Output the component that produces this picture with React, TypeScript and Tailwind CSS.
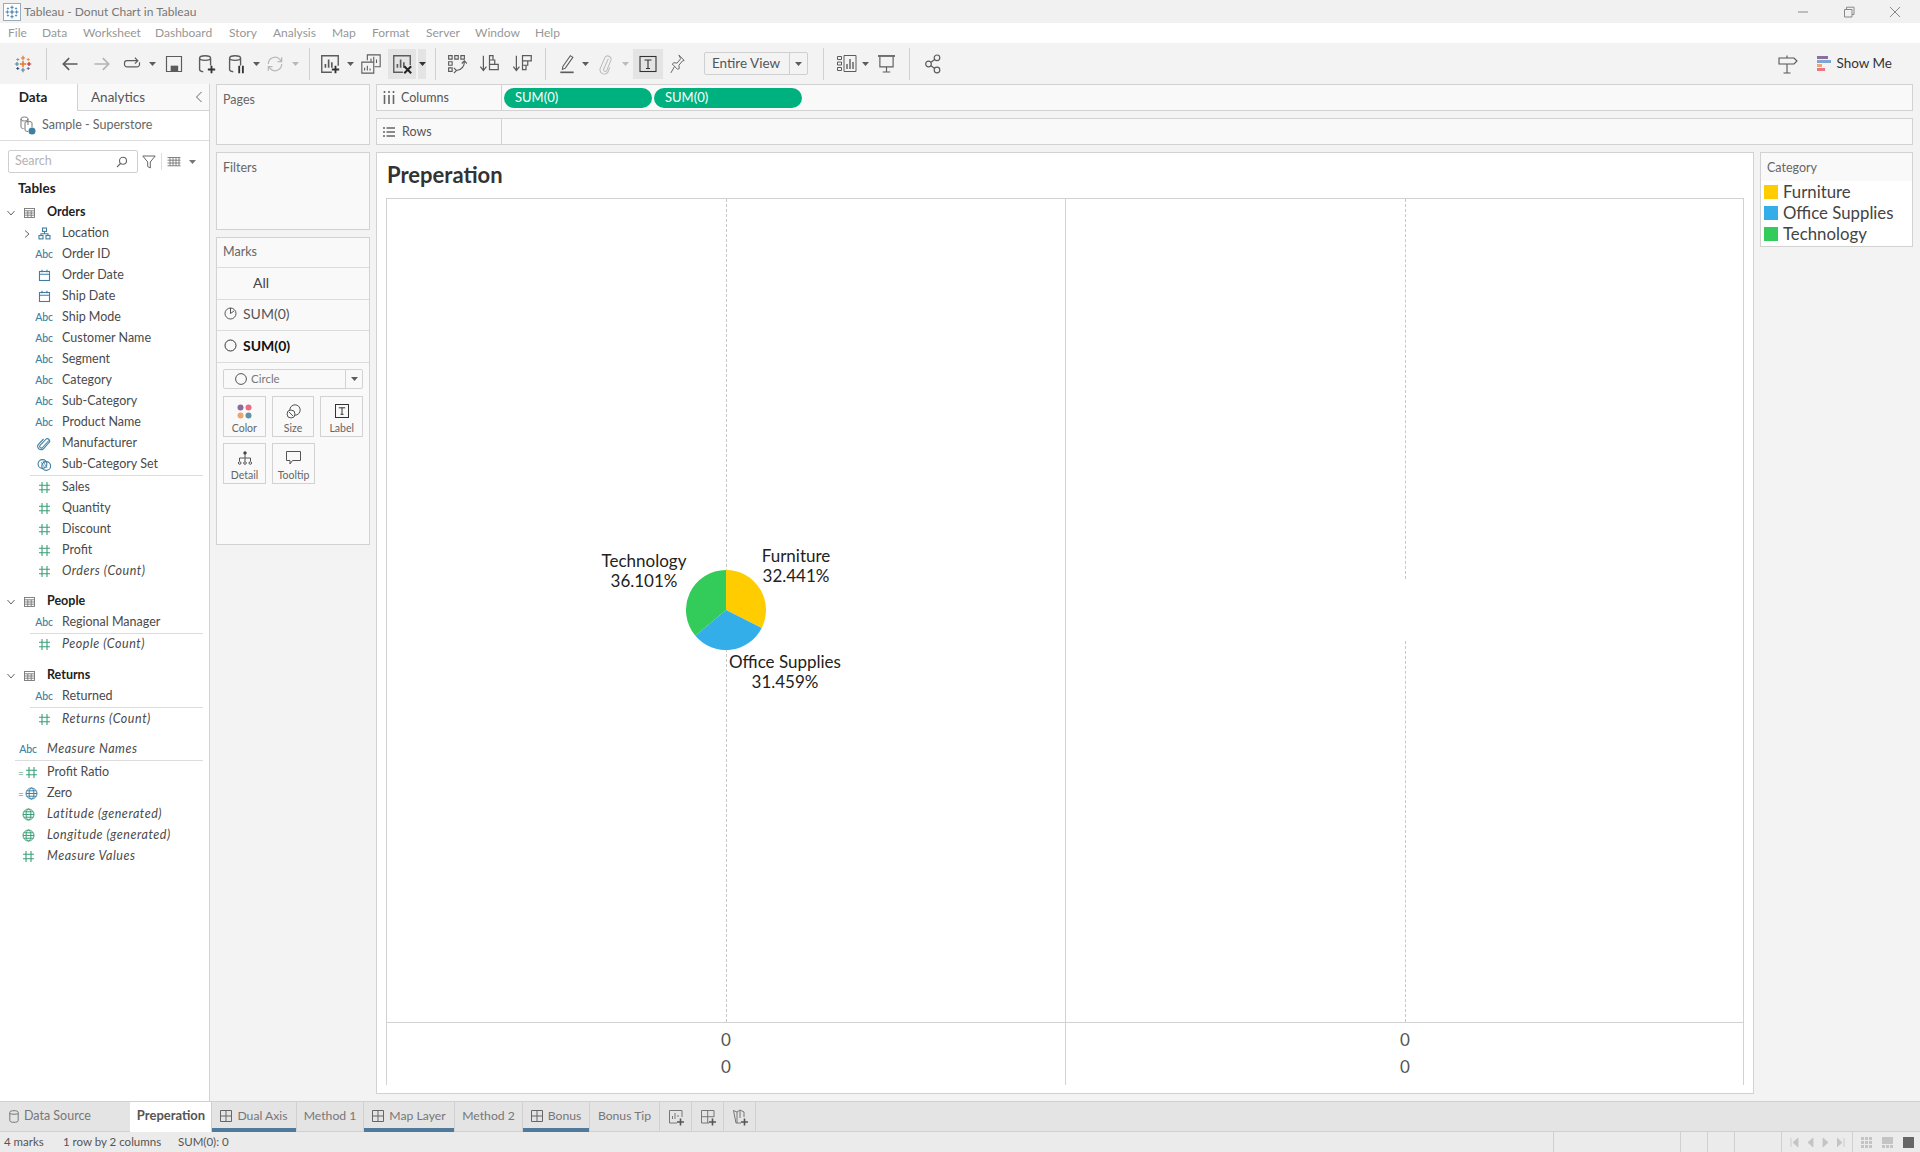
import React from "react";

const S = ({ w = 20, h = 20, vb = "0 0 24 24", c = "#5c5c5c", sw = 1.5, children, className = "" }: any) => (
  <svg width={w} height={h} viewBox={vb} fill="none" stroke={c} strokeWidth={sw} strokeLinecap="butt" strokeLinejoin="miter" className={className}>
    {children}
  </svg>
);

const Caret = ({ c = "#5c5c5c" }: { c?: string }) => (
  <svg width="7" height="4" viewBox="0 0 7 4"><path d="M0 0h7L3.5 4z" fill={c} /></svg>
);

const Slot = ({ w, ml, bg, children }: any) => (
  <div className={`flex h-[30px] shrink-0 items-center justify-center ${w} ${ml || ""} ${bg || ""}`}>{children}</div>
);

const VDiv = ({ ml }: { ml: string }) => <div className={`h-[32px] w-px shrink-0 bg-[#d0d0d0] ${ml}`} />;

const Logo = ({ size = 18, mono }: { size?: number; mono?: string }) => (
  <svg width={size} height={size} viewBox="0 0 24 24" strokeWidth="1.6" fill="none">
    <path d="M12 1v6M9.2 4h5.6" stroke={mono || "#e8762d"} />
    <path d="M12 17v6M9.2 20h5.6" stroke={mono || "#5b879b"} />
    <path d="M1 12h6M4 9.2v5.6" stroke={mono || "#59879b"} />
    <path d="M17 12h6M20 9.2v5.6" stroke={mono || "#c72035"} />
    <path d="M12 8v8M8 12h8" stroke={mono || "#e8762d"} strokeWidth="2" />
    <path d="M5 4v4M3 6h4" stroke={mono || "#7099a6"} strokeWidth="1.2" />
    <path d="M19 4v4M17 6h4" stroke={mono || "#eb9129"} strokeWidth="1.2" />
    <path d="M5 16v4M3 18h4" stroke={mono || "#1f447d"} strokeWidth="1.2" />
    <path d="M19 16v4M17 18h4" stroke={mono || "#5b6591"} strokeWidth="1.2" />
  </svg>
);

const Cyl = () => (
  <path d="M5 5.5C5 3.5 7.5 3 11 3s6 .5 6 2.5v8M5 5.5V18c0 1.5 1.5 2.2 4 2.5M5 5.5C5 7.5 7.5 8 11 8s6-.5 6-2.5" />
);
const Bars = () => <path d="M7 16v-4M10.5 16V7M14 16v-6" strokeWidth="1.8" />;

const Hash = ({ c = "#3b9f78" }: { c?: string }) => (
  <S w={13} h={13} vb="0 0 13 13" c={c} sw={1.1}>
    <path d="M4 1v11M9 1v11M1 4.2h11M1 8.8h11" />
  </S>
);
const Abc = () => <span className="text-[10.5px] font-medium tracking-[-0.2px] text-[#3f7fa3]">Abc</span>;
const Cal = () => (
  <S w={13} h={13} vb="0 0 13 13" c="#3f7fa3" sw={1.1}>
    <rect x="1.5" y="2.5" width="10" height="9" />
    <path d="M1.5 5.2h10M4 .8v2.5M9 .8v2.5" />
  </S>
);
const Hier = () => (
  <S w={13} h={13} vb="0 0 13 13" c="#3f7fa3" sw={1.1}>
    <rect x="4.5" y="1" width="4" height="3.4" />
    <rect x="1" y="8.5" width="4" height="3.4" />
    <rect x="8" y="8.5" width="4" height="3.4" />
    <path d="M6.5 4.4v2.3M3 8.5V6.7h7v1.800" />
  </S>
);
const Clip = ({ c = "#3f7fa3", w = 14, h = 14, sw = 1.1 }: { c?: string; w?: number; h?: number; sw?: number }) => (
  <S w={w} h={h} vb="0 0 14 14" c={c} sw={sw}>
    <path d="M12 3.5L5.5 10.5a1.6 1.6 0 0 1-2.4-2.2L9.5 1.7a2.5 2.5 0 0 1 3 3.3L6.2 12a3.4 3.4 0 0 1-5-4.4L6.5 2" />
  </S>
);
const SetI = () => (
  <S w={15} h={14} vb="0 0 15 14" c="#3f7fa3" sw={1.1}>
    <circle cx="5.5" cy="6" r="4.4" />
    <circle cx="9.2" cy="8" r="4.4" />
    <path d="M6 3l4 7M4 4l4 6" strokeWidth="0.7" />
  </S>
);
const Globe = ({ c = "#3b9f78" }: { c?: string }) => (
  <S w={13} h={13} vb="0 0 13 13" c={c} sw={1}>
    <circle cx="6.5" cy="6.5" r="5.5" />
    <ellipse cx="6.5" cy="6.5" rx="2.4" ry="5.5" />
    <path d="M1 6.5h11M1.8 3.8h9.4M1.8 9.2h9.4" />
  </S>
);
const TableI = () => (
  <S w={11} h={10} vb="0 0 11 10" c="#777" sw={0.9}>
    <rect x=".5" y=".5" width="10" height="9" />
    <path d="M.5 2.8h10M.5 5h10M.5 7.2h10M3.8 2.8v6.7M7.2 2.8v6.7" />
  </S>
);
const Chev = ({ down = true }: { down?: boolean }) => (
  <S w={8} h={8} vb="0 0 8 8" c="#666" sw={1}>
    {down ? <path d="M.5 2L4 6l3.5-4" /> : <path d="M2 .5L6 4 2 7.5" />}
  </S>
);

type F = { t: string; i?: React.ReactNode; it?: boolean };
const FieldRow = ({ t, i, it, deep = true }: F & { deep?: boolean }) => (
  <div className="flex h-[21px] items-center">
    <div className={`flex shrink-0 justify-center ${deep ? "ml-[34px] w-[20px]" : "ml-[18px] w-[20px]"}`}>{i}</div>
    <span className={`whitespace-nowrap text-[#4a4a4a] ${deep ? "ml-[8px]" : "ml-[9px]"} ${it ? "italic tracking-[0.55px]" : ""}`}>{t}</span>
  </div>
);
const Group = ({ t, mt }: { t: string; mt: string }) => (
  <div className={`flex h-[21px] items-center ${mt}`}>
    <div className="ml-[7px] flex w-[8px] justify-center"><Chev /></div>
    <div className="ml-[9px] flex w-[11px]"><TableI /></div>
    <span className="ml-[12px] font-bold text-[#222]">{t}</span>
  </div>
);
const Rule = ({ ml = "ml-[30px]", mb = "" }: { ml?: string; mb?: string }) => <div className={`mr-[6px] h-px bg-[#dcdcdc] ${ml} ${mb}`} />;

const Panel = ({ t, h }: { t: string; h: string }) => (
  <div className={`border border-[#d2d2d2] bg-[#f9f9f9] ${h}`}>
    <div className="ml-[6px] mt-[6px] text-[#666]">{t}</div>
  </div>
);

const MarkRow = ({ i, children, bold, h = "h-[32px]", pb = "pb-[2px]" }: any) => (
  <div className={`flex items-center border-t border-[#dcdcdc] pl-[6px] text-[14px] ${h} ${pb} ${bold ? "font-bold text-[#111]" : "text-[#555]"}`}>
    <div className="mr-[6px] flex w-[14px] justify-center">{i}</div>
    {children}
  </div>
);
const MarkBtn = ({ l, children }: any) => (
  <div className="flex h-[41px] w-[43px] flex-col items-center justify-between border border-[#d2d2d2] pb-[1px] pt-[5px] text-[10.5px] text-[#666]">
    <div className="flex h-[18px] items-center">{children}</div>
    <span className="leading-[13px]">{l}</span>
  </div>
);

const Tab = ({ t, w, grid, under, active, bold }: any) => (
  <div className={`relative flex h-[30px] shrink-0 items-center justify-center gap-[5px] border-r border-[#d0d0d0] ${w} ${active ? "bg-white pl-[1px]" : ""}`}>
    {grid && (
      <S w={12} h={12} vb="0 0 12 12" c="#666" sw={1} className="-mt-[3px]">
        <path d="M.5.5h11v11H.5zM6 .5v11M.5 6h11" />
      </S>
    )}
    <span className={`${bold ? "-mt-[3px] text-[13px] font-bold text-[#555]" : "-mt-[1px] text-[#777]"}`}>{t}</span>
    {under && <div className="absolute bottom-0 left-0 h-[4px] w-full bg-[#4f7a9c]" />}
  </div>
);

const ADD = ({ children }: any) => (
  <div className="flex h-[30px] w-[32px] shrink-0 items-center justify-center border-r border-[#d0d0d0] pl-[2px]">
    <S w={17} h={17} vb="0 0 17 17" c="#777" sw={1}>
      {children}
      <path d="M12.5 9.5v7M9 13h7" stroke="#555" strokeWidth="1.6" />
    </S>
  </div>
);

const Zero = () => (
  <div className="flex h-[27px] w-full items-center justify-center text-[17px] text-[#555]">0</div>
);

export default function App() {
  const orders: F[] = [
    { t: "Order ID", i: <Abc /> },
    { t: "Order Date", i: <Cal /> },
    { t: "Ship Date", i: <Cal /> },
    { t: "Ship Mode", i: <Abc /> },
    { t: "Customer Name", i: <Abc /> },
    { t: "Segment", i: <Abc /> },
    { t: "Category", i: <Abc /> },
    { t: "Sub-Category", i: <Abc /> },
    { t: "Product Name", i: <Abc /> },
    { t: "Manufacturer", i: <Clip /> },
    { t: "Sub-Category Set", i: <SetI /> },
  ];
  const meas: F[] = [
    { t: "Sales", i: <Hash /> },
    { t: "Quantity", i: <Hash /> },
    { t: "Discount", i: <Hash /> },
    { t: "Profit", i: <Hash /> },
    { t: "Orders (Count)", i: <Hash />, it: true },
  ];
  const menu: [string, string][] = [
    ["File", "w-[34px]"], ["Data", "w-[41px]"], ["Worksheet", "w-[72px]"], ["Dashboard", "w-[74px]"], ["Story", "w-[44px]"],
    ["Analysis", "w-[59px]"], ["Map", "w-[40px]"], ["Format", "w-[54px]"], ["Server", "w-[49px]"], ["Window", "w-[60px]"], ["Help", "w-[40px]"],
  ];
  return (
    <div className="flex h-[1152px] w-[1920px] flex-col overflow-hidden bg-[#f3f3f3] text-[12.5px] [font-family:Lato,'Liberation_Sans',sans-serif]">
      {/* title */}
      <div className="flex h-[23px] shrink-0 items-center bg-[#f1f1f1] pl-[3px]">
        <div className="flex h-[18px] w-[18px] items-center justify-center border border-[#9ab] bg-white"><Logo size={14} mono="#3c7cab" /></div>
        <span className="ml-[3px] mt-[1px] text-[12px] text-[#777]">Tableau - Donut Chart in Tableau</span>
        <div className="ml-auto flex items-center pr-[19px]">
          <S w={12} h={12} vb="0 0 12 12" c="#888" sw={1}><path d="M1 6h10" /></S>
          <S w={12} h={12} vb="0 0 12 12" c="#888" sw={1} className="ml-[34px]"><path d="M1.5 3.5h7.5v7.5H1.5zM3.5 3.5V1.2H11v7.3H9" /></S>
          <S w={12} h={12} vb="0 0 12 12" c="#888" sw={1} className="ml-[34px]"><path d="M1 1l10 10M11 1L1 11" /></S>
        </div>
      </div>
      {/* menu */}
      <div className="flex h-[20px] shrink-0 items-center bg-white pl-[8px] text-[12px] text-[#979797]">
        {menu.map(([m, w]) => <span key={m} className={`block ${w}`}>{m}</span>)}
      </div>
      {/* toolbar */}
      <div className="flex h-[41px] shrink-0 items-center bg-[#f3f3f3]">
        <Slot w="w-[46px]"><Logo size={18} /></Slot>
        <VDiv ml="" />
        <Slot w="w-[32px]" ml="ml-[7px]"><S w={20} h={20} sw={2}><path d="M21 12H4M11 5l-7 7 7 7" /></S></Slot>
        <Slot w="w-[32px]"><S w={20} h={20} sw={2} c="#b4b4b4"><path d="M3 12h17M13 5l7 7-7 7" /></S></Slot>
        <Slot w="w-[28px]"><S w={22} h={20} sw={1.4}><path d="M3 11.5V11a3 3 0 0 1 3-3h13M15.5 4.5L19 8l-3.5 3.5M21 10v2.5a3 3 0 0 1-3 3H6a3 3 0 0 1-3-3v-2" /></S></Slot>
        <Slot w="w-[12px]"><Caret /></Slot>
        <Slot w="w-[32px]"><S w={20} h={20} sw={1.4}><path d="M3 3h18v18H3z" /><rect x="8" y="14" width="9" height="7" fill="#5c5c5c" stroke="none" /></S></Slot>
        <Slot w="w-[32px]"><S w={22} h={22}><Cyl /><path d="M18 14v8M14 18h8" stroke="#333" strokeWidth="2" /></S></Slot>
        <Slot w="w-[28px]"><S w={22} h={22}><Cyl /><path d="M15.5 14v8M19.5 14v8" stroke="#333" strokeWidth="2" /></S></Slot>
        <Slot w="w-[12px]"><Caret /></Slot>
        <Slot w="w-[26px]"><S w={20} h={20} c="#b8b8b8"><path d="M4 12a8 8 0 0 1 14-5.3L20 9M20 12a8 8 0 0 1-14 5.3L4 15M20 4v5h-5M4 20v-5h5" /></S></Slot>
        <Slot w="w-[14px]"><Caret c="#b8b8b8" /></Slot>
        <VDiv ml="ml-[7px]" />
        <Slot w="w-[28px]" ml="ml-[6px]"><S w={22} h={22}><path d="M14 21H3V3h18v11" /><Bars /><path d="M18 14v8M14 18h8" stroke="#333" strokeWidth="2" /></S></Slot>
        <Slot w="w-[12px]"><Caret /></Slot>
        <Slot w="w-[30px]"><S w={22} h={22} sw={1.2}><path d="M8 8V2h14v13h-6M2 10h13v12H2z" /><path d="M12 9.5V6M15 9.5V4M18 11V7" /><path d="M5 19v-3M8 19v-5M11 19v-2" /></S></Slot>
        <Slot w="w-[28px]" ml="ml-[2px]" bg="bg-[#e4e4e4]"><S w={22} h={22}><path d="M13 21H3V3h18v10" /><Bars /><path d="M14.5 14.5l7.5 7.5M22 14.5L14.5 22" stroke="#222" strokeWidth="2.2" /></S></Slot>
        <Slot w="w-[8px]" ml="ml-[2px]" bg="bg-[#e4e4e4]"><Caret c="#333" /></Slot>
        <VDiv ml="ml-[9px]" />
        <Slot w="w-[28px]" ml="ml-[6px]"><S w={21} h={21} sw={1.3}><path d="M3 3h4v4H3zM10 3h4v4h-4zM17 3h4v4h-4zM3 10h4v4H3zM3 17h4v4H3z" /><path d="M21 10c0 6-3 9-9 10M9 17l3 3-3 3M18 12l3-3 3 3" /></S></Slot>
        <Slot w="w-[28px]" ml="ml-[5px]"><S w={21} h={21} sw={1.4}><path d="M5 3v17M1.5 15.5L5 20l3.5-4.5" /><path d="M12 3h4v5h-4zM12 8h6v5h-6zM12 13h10v6H12z" /></S></Slot>
        <Slot w="w-[28px]" ml="ml-[5px]"><S w={21} h={21} sw={1.4}><path d="M5 3v17M1.5 15.5L5 20l3.5-4.5" /><path d="M12 3h10v6H12zM12 9h6v5h-6zM12 14h4v5h-4z" /></S></Slot>
        <VDiv ml="ml-[9px]" />
        <Slot w="w-[28px]" ml="ml-[7px]"><S w={20} h={22} sw={1.3}><path d="M7 15L16 2l3 2-9 13-3.5 1.5z" /><path d="M4 22h16" strokeWidth="2" /></S></Slot>
        <Slot w="w-[12px]" ml="-ml-[2px]"><Caret /></Slot>
        <Slot w="w-[28px]"><S w={13} h={22} vb="0 0 13 23" c="#bdbdbd" sw={1.1}><path d="M9.500 6L4.500 17a1.800 1.800 0 0 0 3.200 1.500L12 8a3.500 3.500 0 0 0-6-3.500L1.500 15a4.500 4.500 0 0 0 7.500 5L11 15" /></S></Slot>
        <Slot w="w-[12px]"><Caret c="#bbb" /></Slot>
        <Slot w="w-[30px]" ml="ml-[2px]" bg="bg-[#e4e4e4]"><S w={18} h={18} vb="0 0 18 18" c="#333" sw={1.1}><rect x="1" y="1.5" width="16" height="15" /><path d="M5.5 5h7M9 5v8.500M7 13.500h4" /></S></Slot>
        <Slot w="w-[28px]" ml="ml-[1px]"><S w={16} h={20} vb="0 0 18 22" c="#666" sw={1.1}><path d="M10 1l6 6-2 .5-4 5 .5 3.500-2 1-6-6 2-1.500 3.500.5L12 5zM5 14l-4 7" /></S></Slot>
        <div className="ml-[12px] flex h-[23px] w-[104px] shrink-0 items-center rounded-[2px] border border-[#cfcfcf] text-[13.5px] text-[#555]">
          <span className="w-[84px] pl-[7px]">Entire View</span>
          <div className="flex h-full flex-1 items-center justify-center border-l border-[#cfcfcf]"><Caret /></div>
        </div>
        <VDiv ml="ml-[15px]" />
        <Slot w="w-[21px]" ml="ml-[12px]"><S w={20} h={18} vb="0 0 20 18" sw={1}><path d="M.5 1.500h4v3h-4zM.5 7h4v3h-4zM.5 12.500h4v3h-4zM7 .5h12v16H7z" /><path d="M10 14V9M13 14V4M16 14V7" strokeWidth="1.400" /></S></Slot>
        <Slot w="w-[12px]" ml="ml-[2px]"><Caret /></Slot>
        <Slot w="w-[17px]" ml="ml-[7px]"><S w={18} h={20} vb="0 0 18 20" sw={1.2}><path d="M0 1.500h18" strokeWidth="1.800" /><path d="M2 2v11h14V2M9 13v5M5 18.500h8" /></S></Slot>
        <VDiv ml="ml-[14px]" />
        <Slot w="w-[16px]" ml="ml-[15px]"><S w={16} h={20} vb="0 0 16 20" sw={1.2}><circle cx="3.500" cy="10" r="2.800" /><circle cx="12" cy="3.800" r="2.800" /><circle cx="12" cy="16" r="2.800" /><path d="M6 8.300l3.700-2.800M6 11.700l3.700 2.800" /></S></Slot>
        <div className="ml-auto flex items-center pr-[28px]">
          <S w={20} h={20} vb="0 0 20 20" sw={1.1} c="#555"><path d="M1 4h15l3 3-3 3H1zM9 1.500V4M9 10v9M5.500 19h7" /></S>
          <div className="ml-[19px] flex w-[14px] flex-col">
            <div className="h-[3px] w-[11px] bg-[#8a6f9f]" />
            <div className="mt-px h-[3px] w-[14px] bg-[#7fa6cf]" />
            <div className="mt-px h-[3px] w-[5px] bg-[#efa56f]" />
            <div className="mt-px h-[3px] w-[8px] bg-[#f0747f]" />
          </div>
          <span className="ml-[5px] text-[13.5px] text-[#333]">Show Me</span>
        </div>
      </div>

      {/* body */}
      <div className="flex h-[1017px] shrink-0">
        {/* sidebar */}
        <div className="flex w-[210px] shrink-0 flex-col border-r border-[#d2d2d2] bg-white">
          <div className="flex h-[27px] shrink-0 text-[13.5px]">
            <div className="flex w-[77px] items-center justify-center pr-[11px] font-bold text-[#222]">Data</div>
            <div className="flex flex-1 items-center border-b border-l border-[#d2d2d2] bg-[#f9f9f9] pl-[13px] text-[#555]">
              <span className="flex-1">Analytics</span>
              <S w={10} h={12} vb="0 0 10 12" c="#666" sw={1} className="mr-[5px]"><path d="M7.500 1L2.500 6l5 5" /></S>
            </div>
          </div>
          <div className="flex h-[30px] shrink-0 items-center border-b border-[#dcdcdc] pl-[19px] text-[#666]">
            <S w={17} h={19} vb="0 0 17 19" c="#777" sw={1}><path d="M2 3c0-1.500 1.500-2 3.500-2S9 1.500 9 3v6M2 3v8c0 1 1 1.500 2.500 1.500M2 3c0 1.500 1.500 2 3.500 2S9 4.500 9 3M6 7c0-1 1.500-1.500 3.500-1.500S13 6 13 7v4M6 7v7c0 1 1.500 1.500 3 1.500" /><circle cx="13" cy="15" r="3.500" fill="#3f7fa3" stroke="none" /></S>
            <span className="ml-[6px]">Sample - Superstore</span>
          </div>
          <div className="ml-[8px] mt-[9px] flex h-[23px] shrink-0 items-center">
            <div className="flex h-[23px] w-[130px] items-center justify-between rounded-[2px] border border-[#cfcfcf] pl-[6px] pr-[9px] text-[#b4b4b4]">
              <span>Search</span>
              <S w={12} h={12} vb="0 0 12 12" c="#666" sw={1.1}><circle cx="7" cy="4.800" r="3.500" /><path d="M4.500 7.500L1 11" /></S>
            </div>
            <S w={14} h={14} vb="0 0 14 14" c="#666" sw={1} className="ml-[4px]"><path d="M.8 1h12.400L8.300 7v6l-2.600-1.500V7z" /></S>
            <div className="ml-[5px] h-[17px] w-px bg-[#ddd]" />
            <S w={14} h={10} vb="0 0 14 10" c="#777" sw={.9} className="ml-[5px]"><path d="M.5.500h13M.5 3.200h13M.5 6h13M.5 8.800h13M3 .5v8.500M6 .5v8.500M9 .5v8.500M12 .5v8.500" /></S>
            <div className="ml-[8px]"><Caret c="#777" /></div>
          </div>
          <div className="ml-[18px] mt-[5px] flex h-[21px] shrink-0 items-center text-[13.5px] font-bold text-[#222]">Tables</div>
          <Group t="Orders" mt="mt-[3px]" />
          <div className="flex h-[21px] items-center">
            <div className="ml-[23px] flex w-[8px] justify-center"><Chev down={false} /></div>
            <div className="ml-[3px] flex w-[20px] justify-center"><Hier /></div>
            <span className="ml-[8px] text-[#4a4a4a]">Location</span>
          </div>
          {orders.map((f) => <FieldRow key={f.t} {...f} />)}
          <Rule mb="mb-[1px]" />
          {meas.map((f) => <FieldRow key={f.t} {...f} />)}
          <Group t="People" mt="mt-[9px]" />
          <FieldRow t="Regional Manager" i={<Abc />} />
          <Rule />
          <FieldRow t="People (Count)" i={<Hash />} it />
          <Group t="Returns" mt="mt-[10px]" />
          <FieldRow t="Returned" i={<Abc />} />
          <Rule mb="mb-[1px]" />
          <FieldRow t="Returns (Count)" i={<Hash />} it />
          <div className="mt-[9px]"><FieldRow deep={false} t="Measure Names" i={<Abc />} it /></div>
          <Rule ml="ml-[15px]" mb="mb-[1px]" />
          <FieldRow deep={false} t="Profit Ratio" i={<span className="flex items-center text-[#3b9f78]"><span className="mr-px text-[10px] leading-none">=</span><Hash /></span>} />
          <FieldRow deep={false} t="Zero" i={<span className="flex items-center text-[#3f7fa3]"><span className="mr-px text-[10px] leading-none">=</span><Globe c="#3f7fa3" /></span>} />
          <FieldRow deep={false} t="Latitude (generated)" i={<Globe />} it />
          <FieldRow deep={false} t="Longitude (generated)" i={<Globe />} it />
          <FieldRow deep={false} t="Measure Values" i={<Hash />} it />
        </div>

        {/* shelves column */}
        <div className="ml-[6px] flex w-[154px] shrink-0 flex-col">
          <Panel t="Pages" h="h-[61px]" />
          <div className="mt-[7px]"><Panel t="Filters" h="h-[78px]" /></div>
          <div className="mt-[7px] h-[308px] border border-[#d2d2d2] bg-[#f9f9f9]">
            <div className="flex h-[29px] items-center pl-[6px] text-[#666]">Marks</div>
            <div className="flex h-[32px] items-center border-t border-[#dcdcdc] pb-[2px] pl-[36px] text-[14px] text-[#444]">All</div>
            <MarkRow h="h-[31px]" pb="pb-[3px]" i={<S w={13} h={13} vb="0 0 13 13" c="#555" sw={1}><circle cx="6.500" cy="6.500" r="5.500" /><path d="M6.500 6.500V1M6.500 6.500L10 4" /></S>}>SUM(0)</MarkRow>
            <MarkRow bold i={<S w={13} h={13} vb="0 0 13 13" c="#333" sw={1}><circle cx="6.500" cy="6.500" r="5.500" /></S>}>SUM(0)</MarkRow>
            <div className="border-t border-[#dcdcdc] px-[6px] pt-[6px]">
              <div className="flex h-[20px] w-[140px] items-center rounded-[2px] border border-[#d2d2d2] text-[11.5px] text-[#777]">
                <div className="flex w-[121px] items-center pl-[11px]">
                  <S w={12} h={12} vb="0 0 12 12" c="#555" sw={1}><circle cx="6" cy="6" r="5.400" /></S>
                  <span className="ml-[4px]">Circle</span>
                </div>
                <div className="flex h-full flex-1 items-center justify-center border-l border-[#d2d2d2]"><Caret /></div>
              </div>
              <div className="mt-[7px] flex gap-[6px]">
                <MarkBtn l="Color">
                  <svg width="15" height="15" viewBox="0 0 15 15"><circle cx="3.500" cy="3.500" r="3" fill="#8a6b9c" /><circle cx="11.500" cy="3.500" r="3" fill="#ec6b81" /><circle cx="3.500" cy="11.500" r="3" fill="#eea370" /><circle cx="11.500" cy="11.500" r="3" fill="#5f93a0" /></svg>
                </MarkBtn>
                <MarkBtn l="Size">
                  <S w={15} h={15} vb="0 0 15 15" c="#555" sw={1}><circle cx="9" cy="6" r="5.200" /><circle cx="5" cy="10" r="4" fill="#f9f9f9" /><path d="M3 8l4 4" /></S>
                </MarkBtn>
                <MarkBtn l="Label">
                  <S w={14} h={14} vb="0 0 14 14" c="#333" sw={1}><rect x=".5" y=".5" width="13" height="13" /><path d="M3.800 3.800h6.400M7 3.800v6.500M5.500 10.300h3" /></S>
                </MarkBtn>
              </div>
              <div className="mt-[6px] flex gap-[6px]">
                <MarkBtn l="Detail">
                  <S w={14} h={15} vb="0 0 14 15" c="#555" sw={1}><circle cx="7" cy="2" r="1.700" fill="#444" stroke="none" /><path d="M7 3.500V10M1.500 10V7h11v3" /><circle cx="1.700" cy="12" r="1.300" /><circle cx="7" cy="12" r="1.300" /><circle cx="12.300" cy="12" r="1.300" /></S>
                </MarkBtn>
                <MarkBtn l="Tooltip">
                  <S w={15} h={14} vb="0 0 15 14" c="#555" sw={1}><path d="M.5.500h14v9H6.500L4 13V9.500H.5z" /></S>
                </MarkBtn>
              </div>
            </div>
          </div>
        </div>

        {/* right column */}
        <div className="ml-[6px] mr-[7px] flex flex-1 flex-col">
          <div className="flex h-[27px] shrink-0 border border-[#d2d2d2] bg-[#f9f9f9]">
            <div className="flex w-[125px] items-center border-r border-[#d2d2d2] pl-[6px] text-[#555]">
              <S w={12} h={13} vb="0 0 12 13" c="#666" sw={1.600}><path d="M1.500 4v9M6 4v9M10.500 4v9" /><path d="M1.500 0v2M6 0v2M10.500 0v2" /></S>
              <span className="ml-[6px] mt-[1px]">Columns</span>
            </div>
            <div className="ml-[2px] mt-[3px] flex h-[20px] w-[148px] items-center rounded-[10px] bg-[#00b180] pl-[11px] text-[13px] text-white">SUM(0)</div>
            <div className="ml-[2px] mt-[3px] flex h-[20px] w-[148px] items-center rounded-[10px] bg-[#00b180] pl-[11px] text-[13px] text-white">SUM(0)</div>
          </div>
          <div className="mt-[7px] flex h-[27px] shrink-0 border border-[#d2d2d2] bg-[#f9f9f9]">
            <div className="flex w-[125px] items-center border-r border-[#d2d2d2] pl-[6px] text-[#555]">
              <S w={12} h={10} vb="0 0 12 10" c="#666" sw={1.300}><path d="M0 1h2M3.500 1H12M0 5h2M3.500 5H12M0 9h2M3.500 9H12" /></S>
              <span className="ml-[7px] mt-[1px]">Rows</span>
            </div>
          </div>
          <div className="mt-[7px] flex h-[942px] gap-[6px]">
            {/* view */}
            <div className="flex w-[1378px] shrink-0 flex-col border border-[#d2d2d2] bg-white pb-[8px] pl-[9px] pr-[9px]">
              <div className="flex h-[45px] shrink-0 items-center pb-[2px] pl-[1px] text-[22px] font-bold text-[#333]">Preperation</div>
              <div className="flex h-[824px] shrink-0 border-x border-t border-[#d2d2d2]">
                <div className="relative flex w-[679px] justify-center border-r border-[#d2d2d2]">
                  <div className="h-full w-0 border-l border-dashed border-[#c8c8c8]" />
                  <svg width="80" height="80" viewBox="0 0 80 80" className="absolute left-[299px] top-[371px]">
                    <path d="M40 40V0A40 40 0 0 1 75.700 58.030z" fill="#ffcc00" />
                    <path d="M40 40L75.700 58.030A40 40 0 0 1 9.350 65.700z" fill="#33aee8" />
                    <path d="M40 40L9.350 65.700A40 40 0 0 1 40 0z" fill="#33cc5a" />
                  </svg>
                  <div className="absolute left-[177px] top-[352px] w-[160px] text-center text-[17px] leading-[20px] text-[#222]">Technology<br />36.101%</div>
                  <div className="absolute left-[329px] top-[347px] w-[160px] text-center text-[17px] leading-[20px] text-[#222]">Furniture<br />32.441%</div>
                  <div className="absolute left-[318px] top-[453px] w-[160px] text-center text-[17px] leading-[20px] text-[#222]">Office Supplies<br />31.459%</div>
                </div>
                <div className="flex flex-1 flex-col items-center pl-[1px]">
                  <div className="h-[380px] w-0 border-l border-dashed border-[#c8c8c8]" />
                  <div className="h-[62px]" />
                  <div className="w-0 flex-1 border-l border-dashed border-[#c8c8c8]" />
                </div>
              </div>
              <div className="flex h-[63px] shrink-0 border-x border-t border-[#d2d2d2]">
                <div className="flex w-[679px] flex-col justify-center border-r border-[#d2d2d2] pb-[2px]"><Zero /><Zero /></div>
                <div className="flex flex-1 flex-col justify-center pb-[2px] pl-[1px]"><Zero /><Zero /></div>
              </div>
            </div>
            {/* legend */}
            <div className="h-[95px] w-[153px] shrink-0 border border-[#d2d2d2] bg-white">
              <div className="flex h-[28px] items-center bg-[#f9f9f9] pl-[6px] pt-[2px] text-[#666]">Category</div>
              {[["Furniture", "bg-[#ffcc00]"], ["Office Supplies", "bg-[#33aee8]"], ["Technology", "bg-[#33cc5a]"]].map(([t, c]) => (
                <div key={t} className="flex h-[21px] items-center pl-[3px] text-[16.8px] text-[#444]">
                  <div className={`h-[14px] w-[14px] ${c}`} />
                  <span className="ml-[5px]">{t}</span>
                </div>
              ))}
            </div>
          </div>
        </div>
      </div>

      {/* tabs */}
      <div className="flex h-[30px] shrink-0 border-t border-[#d0d0d0] bg-[#e4e4e4] text-[12.2px]">
        <div className="flex w-[130px] shrink-0 items-center gap-[5px] pl-[9px] text-[12.5px] text-[#777]">
          <S w={10} h={13} vb="0 0 10 13" c="#777" sw={1}><path d="M.8 2.500C.8 1 3 .7 5 .7s4.200.3 4.200 1.800v8c0 1.500-2.200 1.800-4.200 1.800S.8 12 .8 10.500zM.8 3.500c1 1 7.400 1 8.400 0" /></S>
          <span className="-mt-[1px]">Data Source</span>
        </div>
        <Tab t="Preperation" w="w-[82px]" active bold />
        <Tab t="Dual Axis" w="w-[85px]" grid under />
        <Tab t="Method 1" w="w-[67px]" />
        <Tab t="Map Layer" w="w-[91px]" grid under />
        <Tab t="Method 2" w="w-[68px]" />
        <Tab t="Bonus" w="w-[67px]" grid under />
        <Tab t="Bonus Tip" w="w-[70px]" />
        <ADD><path d="M9 14H1.500V1.500H14V8" /><path d="M4.500 10V7M7 10V4M10 8V6" /></ADD>
        <ADD><path d="M9 14H1.500V1.500H14V8M7.700 1.500V14M1.500 7.700H14" /></ADD>
        <ADD><path d="M9 14H4L1.500 1.500 5 3l3-2 4 2V8M5 3v11M8 1v8" /></ADD>
      </div>

      {/* status */}
      <div className="flex h-[21px] shrink-0 items-center border-t border-[#d0d0d0] bg-[#ebebeb] text-[11.5px] text-[#555]">
        <span className="ml-[4px] w-[59px]">4 marks</span>
        <span className="w-[115px]">1 row by 2 columns</span>
        <span>SUM(0): 0</span>
        <div className="ml-auto flex h-full">
          <div className="h-full w-[127px] border-l border-[#d0d0d0]" />
          <div className="h-full w-[27px] border-l border-[#d0d0d0]" />
          <div className="h-full w-[27px] border-l border-[#d0d0d0]" />
          <div className="h-full w-[47px] border-l border-[#d0d0d0]" />
          <div className="flex h-full w-[71px] items-center justify-between border-l border-[#d0d0d0] pl-[8px] pr-[6px]">
            {["M1 1v9M8 1v9L3 5.500z", "M7 1v9L2 5.500z", "M2 1v9l5-4.500z", "M7 1v9M0 1v9l5-4.500z"].map((d) => (
              <svg key={d} width="9" height="11" viewBox="0 0 9 11"><path d={d} fill="#c4c4c4" stroke="#c4c4c4" strokeWidth=".8" /></svg>
            ))}
          </div>
          <div className="flex h-full w-[68px] items-center justify-between border-l border-[#d0d0d0] pl-[8px] pr-[6px]">
            <svg width="11" height="11" viewBox="0 0 11 11" fill="#c4c4c4"><path d="M0 0h3v3H0zM4 0h3v3H4zM8 0h3v3H8zM0 4h3v3H0zM4 4h3v3H4zM8 4h3v3H8zM0 8h3v3H0zM4 8h3v3H4zM8 8h3v3H8z" /></svg>
            <svg width="11" height="11" viewBox="0 0 11 11" fill="#c4c4c4"><path d="M0 0h11v7H0zM0 8h3v3H0zM4 8h3v3H4zM8 8h3v3H8z" /></svg>
            <svg width="11" height="11" viewBox="0 0 11 11" fill="#666"><path d="M0 0h11v11H0z" /></svg>
          </div>
        </div>
      </div>
    </div>
  );
}
